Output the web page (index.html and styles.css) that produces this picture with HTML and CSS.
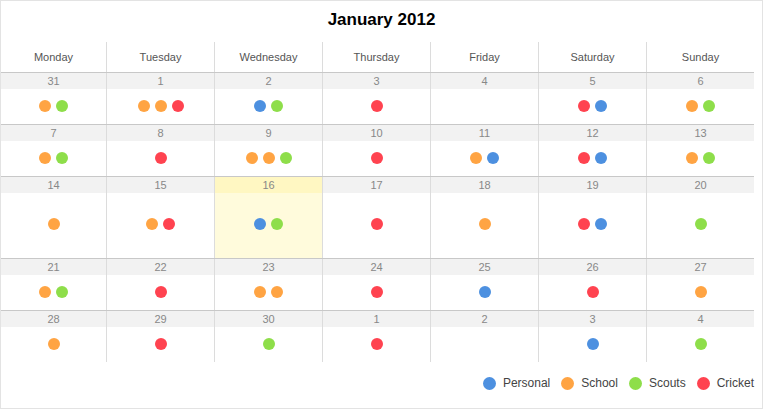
FILE: index.html
```html
<!DOCTYPE html>
<html>
<head>
<meta charset="utf-8">
<link rel="stylesheet" href="styles.css">
</head>
<body>
<div class="calendar">
  <h1 class="title">January 2012</h1>
  <div class="grid head">
    <div class="dow">Monday</div><div class="dow">Tuesday</div><div class="dow">Wednesday</div><div class="dow">Thursday</div><div class="dow">Friday</div><div class="dow">Saturday</div><div class="dow">Sunday</div>
  </div>
  <div class="grid week">
    <div class="cell"><div class="num">31</div><div class="ev"><i class="d o"></i><i class="d g"></i></div></div>
    <div class="cell"><div class="num">1</div><div class="ev"><i class="d o"></i><i class="d o"></i><i class="d r"></i></div></div>
    <div class="cell"><div class="num">2</div><div class="ev"><i class="d b"></i><i class="d g"></i></div></div>
    <div class="cell"><div class="num">3</div><div class="ev"><i class="d r"></i></div></div>
    <div class="cell"><div class="num">4</div><div class="ev"></div></div>
    <div class="cell"><div class="num">5</div><div class="ev"><i class="d r"></i><i class="d b"></i></div></div>
    <div class="cell"><div class="num">6</div><div class="ev"><i class="d o"></i><i class="d g"></i></div></div>
  </div>
  <div class="grid week">
    <div class="cell"><div class="num">7</div><div class="ev"><i class="d o"></i><i class="d g"></i></div></div>
    <div class="cell"><div class="num">8</div><div class="ev"><i class="d r"></i></div></div>
    <div class="cell"><div class="num">9</div><div class="ev"><i class="d o"></i><i class="d o"></i><i class="d g"></i></div></div>
    <div class="cell"><div class="num">10</div><div class="ev"><i class="d r"></i></div></div>
    <div class="cell"><div class="num">11</div><div class="ev"><i class="d o"></i><i class="d b"></i></div></div>
    <div class="cell"><div class="num">12</div><div class="ev"><i class="d r"></i><i class="d b"></i></div></div>
    <div class="cell"><div class="num">13</div><div class="ev"><i class="d o"></i><i class="d g"></i></div></div>
  </div>
  <div class="grid week tall">
    <div class="cell"><div class="num">14</div><div class="ev"><i class="d o"></i></div></div>
    <div class="cell"><div class="num">15</div><div class="ev"><i class="d o"></i><i class="d r"></i></div></div>
    <div class="cell today"><div class="num">16</div><div class="ev"><i class="d b"></i><i class="d g"></i></div></div>
    <div class="cell"><div class="num">17</div><div class="ev"><i class="d r"></i></div></div>
    <div class="cell"><div class="num">18</div><div class="ev"><i class="d o"></i></div></div>
    <div class="cell"><div class="num">19</div><div class="ev"><i class="d r"></i><i class="d b"></i></div></div>
    <div class="cell"><div class="num">20</div><div class="ev"><i class="d g"></i></div></div>
  </div>
  <div class="grid week">
    <div class="cell"><div class="num">21</div><div class="ev"><i class="d o"></i><i class="d g"></i></div></div>
    <div class="cell"><div class="num">22</div><div class="ev"><i class="d r"></i></div></div>
    <div class="cell"><div class="num">23</div><div class="ev"><i class="d o"></i><i class="d o"></i></div></div>
    <div class="cell"><div class="num">24</div><div class="ev"><i class="d r"></i></div></div>
    <div class="cell"><div class="num">25</div><div class="ev"><i class="d b"></i></div></div>
    <div class="cell"><div class="num">26</div><div class="ev"><i class="d r"></i></div></div>
    <div class="cell"><div class="num">27</div><div class="ev"><i class="d o"></i></div></div>
  </div>
  <div class="grid week">
    <div class="cell"><div class="num">28</div><div class="ev"><i class="d o"></i></div></div>
    <div class="cell"><div class="num">29</div><div class="ev"><i class="d r"></i></div></div>
    <div class="cell"><div class="num">30</div><div class="ev"><i class="d g"></i></div></div>
    <div class="cell"><div class="num">1</div><div class="ev"><i class="d r"></i></div></div>
    <div class="cell"><div class="num">2</div><div class="ev"></div></div>
    <div class="cell"><div class="num">3</div><div class="ev"><i class="d b"></i></div></div>
    <div class="cell"><div class="num">4</div><div class="ev"><i class="d g"></i></div></div>
  </div>
  <div class="legend">
    <span class="item"><i class="ld b"></i>Personal</span>
    <span class="item"><i class="ld o"></i>School</span>
    <span class="item"><i class="ld g"></i>Scouts</span>
    <span class="item"><i class="ld r"></i>Cricket</span>
  </div>
</div>
</body>
</html>
```
FILE: styles.css
```css
html, body {
  margin: 0;
  padding: 0;
  background: #fff;
}
.calendar {
  width: 763px;
  height: 409px;
  box-sizing: border-box;
  border: 1px solid #e3e3e3;
  font-family: "Liberation Sans", Arial, sans-serif;
  overflow: hidden;
}
.title {
  margin: 0;
  height: 41px;
  box-sizing: border-box;
  padding-top: 9px;
  text-align: center;
  font-size: 17px;
  line-height: 20px;
  font-weight: bold;
  color: #000;
}
.grid {
  display: grid;
  grid-template-columns: 105px repeat(6, 108px);
  width: 753px;
}
.head {
  height: 30px;
  border-bottom: 1px solid #c8c8c8;
  box-sizing: content-box;
}
.dow {
  font-size: 11px;
  color: #555;
  text-align: center;
  line-height: 30px;
}
.dow + .dow, .cell + .cell {
  border-left: 1px solid #dcdcdc;
}
.week + .week {
  border-top: 1px solid #c8c8c8;
}
.cell {
  display: flex;
  flex-direction: column;
}
.num {
  height: 16px;
  line-height: 16px;
  background: #f2f2f2;
  color: #888;
  font-size: 11px;
  text-align: center;
}
.ev {
  height: 35px;
  box-sizing: border-box;
  padding-bottom: 2px;
  display: flex;
  align-items: center;
  justify-content: center;
  gap: 5px;
}
.tall .ev {
  height: 65px;
  padding-bottom: 4px;
}
.today .num {
  background: #fff7c2;
}
.today .ev {
  background: #fffbdc;
}
.d {
  display: block;
  width: 12px;
  height: 12px;
  border-radius: 50%;
}
.o { background: #ffa443; }
.g { background: #8ede4a; }
.r { background: #ff4350; }
.b { background: #4d90e0; }
.legend {
  display: flex;
  justify-content: flex-end;
  align-items: center;
  gap: 11px;
  width: 753px;
  height: 40px;
  padding-top: 1px;
  font-size: 12px;
  color: #444;
}
.item {
  display: flex;
  align-items: center;
  gap: 7px;
}
.ld {
  display: block;
  width: 13px;
  height: 13px;
  border-radius: 50%;
}
```
